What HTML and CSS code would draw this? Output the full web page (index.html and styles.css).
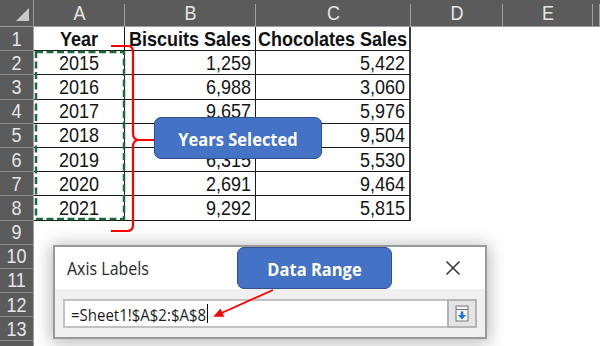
FILE: index.html
```html
<!DOCTYPE html>
<html>
<head>
<meta charset="utf-8">
<link rel="stylesheet" href="styles.css">
</head>
<body>
<div class="page">
  <div class="sheet">
    <div class="corner"><span class="tri"></span></div>
    <div class="ch"><span>A</span></div><div class="ch"><span>B</span></div><div class="ch"><span>C</span></div><div class="ch"><span>D</span></div><div class="ch"><span>E</span></div><div class="ch"></div>

    <div class="rh"><span>1</span></div>
    <div class="c t hd mid"><span>Year</span></div><div class="c t hd mid"><span>Biscuits Sales</span></div><div class="c t hd mid edge"><span>Chocolates Sales</span></div><div class="c"></div><div class="c"></div><div class="c"></div>

    <div class="rh"><span>2</span></div>
    <div class="c t mid"><span>2015</span></div><div class="c t num"><span>1,259</span></div><div class="c t num edge"><span>5,422</span></div><div class="c"></div><div class="c"></div><div class="c"></div>

    <div class="rh"><span>3</span></div>
    <div class="c t mid"><span>2016</span></div><div class="c t num"><span>6,988</span></div><div class="c t num edge"><span>3,060</span></div><div class="c"></div><div class="c"></div><div class="c"></div>

    <div class="rh"><span>4</span></div>
    <div class="c t mid"><span>2017</span></div><div class="c t num"><span>9,657</span></div><div class="c t num edge"><span>5,976</span></div><div class="c"></div><div class="c"></div><div class="c"></div>

    <div class="rh"><span>5</span></div>
    <div class="c t mid"><span>2018</span></div><div class="c t num"></div><div class="c t num edge"><span>9,504</span></div><div class="c"></div><div class="c"></div><div class="c"></div>

    <div class="rh"><span>6</span></div>
    <div class="c t mid"><span>2019</span></div><div class="c t num"><span>6,315</span></div><div class="c t num edge"><span>5,530</span></div><div class="c"></div><div class="c"></div><div class="c"></div>

    <div class="rh"><span>7</span></div>
    <div class="c t mid"><span>2020</span></div><div class="c t num"><span>2,691</span></div><div class="c t num edge"><span>9,464</span></div><div class="c"></div><div class="c"></div><div class="c"></div>

    <div class="rh"><span>8</span></div>
    <div class="c t mid"><span>2021</span></div><div class="c t num"><span>9,292</span></div><div class="c t num edge"><span>5,815</span></div><div class="c"></div><div class="c"></div><div class="c"></div>

    <div class="rh"><span>9</span></div>
    <div class="c"></div><div class="c"></div><div class="c"></div><div class="c"></div><div class="c"></div><div class="c"></div>
    <div class="rh"><span>10</span></div>
    <div class="c"></div><div class="c"></div><div class="c"></div><div class="c"></div><div class="c"></div><div class="c"></div>
    <div class="rh"><span>11</span></div>
    <div class="c"></div><div class="c"></div><div class="c"></div><div class="c"></div><div class="c"></div><div class="c"></div>
    <div class="rh"><span>12</span></div>
    <div class="c"></div><div class="c"></div><div class="c"></div><div class="c"></div><div class="c"></div><div class="c"></div>
    <div class="rh"><span>13</span></div>
    <div class="c"></div><div class="c"></div><div class="c"></div><div class="c"></div><div class="c"></div><div class="c"></div>
    <div class="rh"></div>
    <div class="c"></div><div class="c"></div><div class="c"></div><div class="c"></div><div class="c"></div><div class="c"></div>
  </div>

  <svg class="marks" width="600" height="346" viewBox="0 0 600 346">
    <rect x="36" y="52" width="88" height="167" fill="none" stroke="#1d6a3c" stroke-width="2.5" stroke-dasharray="7 3.5"/>
    <path d="M111,46 H128 Q133,46 133,52 V133 Q133,140 139,140 H156 M139,140 Q133,140 133,147 V225 Q133,231 127,231 H111" fill="none" stroke="#ff0000" stroke-width="2.2"/>
  </svg>

  <div class="callout years"><span>Years Selected</span></div>

  <div class="dialog">
    <div class="dlg-title">
      <span class="dlg-name">Axis Labels</span>
      <svg class="close" width="16" height="16" viewBox="0 0 16 16"><path d="M1.5,1.5 L14.5,14.5 M14.5,1.5 L1.5,14.5" stroke="#333" stroke-width="1.5" fill="none"/></svg>
    </div>
    <div class="dlg-body">
      <div class="field"><span class="ref">=Sheet1!$A$2:$A$8</span><span class="caret"></span></div>
      <div class="btn">
        <svg width="14" height="17" viewBox="0 0 14 17">
          <rect x="1" y="1" width="12" height="15" fill="#f4f4f4" stroke="#777" stroke-width="1"/>
          <line x1="1" y1="4.5" x2="13" y2="4.5" stroke="#777" stroke-width="1"/>
          <path d="M7,6.5 V11" stroke="#1a73d1" stroke-width="2.6"/>
          <path d="M3,10 L11,10 L7,14.5 Z" fill="#1a73d1"/>
        </svg>
      </div>
    </div>
  </div>

  <div class="callout range"><span>Data Range</span></div>

  <svg class="marks" width="600" height="346" viewBox="0 0 600 346">
    <defs>
      <marker id="ah" markerWidth="10" markerHeight="10" refX="7" refY="5" orient="auto" markerUnits="userSpaceOnUse">
        <path d="M0,0.5 L10,5 L0,9.5 Z" fill="#ff0000"/>
      </marker>
    </defs>
    <line x1="273" y1="290" x2="216" y2="315.5" stroke="#ff0000" stroke-width="1.8" marker-end="url(#ah)"/>
  </svg>
</div>
</body>
</html>
```

FILE: styles.css
```css
* { box-sizing: border-box; }
html, body { margin: 0; padding: 0; background: #ffffff; }
body { width: 600px; height: 346px; overflow: hidden; }

.page { position: relative; width: 600px; height: 346px; overflow: hidden; }

.sheet {
  display: grid;
  grid-template-columns: 34px 91px 131px 155px 92px 90px 7px;
  grid-template-rows: 27px repeat(14, 24.2px);
  font-family: "Liberation Sans", Arial, sans-serif;
  font-size: 18px;
  color: #141414;
}
.sheet span { display: inline-block; transform: scaleY(1.12); }

.corner {
  background: #5b5b5b;
  border-right: 1px solid #9a9a9a;
  border-bottom: 1px solid #9a9a9a;
  display: flex;
  justify-content: flex-end;
  align-items: flex-end;
  padding: 0 4px 5px 0;
}
.sheet .tri {
  width: 0; height: 0;
  transform: none;
  border-left: 13px solid transparent;
  border-bottom: 13px solid #c9c9c9;
}

.ch {
  background: linear-gradient(#a0a0a0, #a0a0a0) right 4px / 1px calc(100% - 4px) no-repeat, #5b5b5b;
  border-bottom: 1px solid #a0a0a0;
  color: #e6e6e6;
  display: flex;
  align-items: center;
  justify-content: center;
  line-height: 1;
}

.rh {
  background: #5b5b5b;
  border-right: 1px solid #a0a0a0;
  border-bottom: 1px solid #8e8e8e;
  color: #e6e6e6;
  display: flex;
  align-items: center;
  justify-content: center;
  line-height: 1;
}

.c {
  background: #ffffff;
  display: flex;
  align-items: center;
  padding: 0 3px;
  white-space: nowrap;
  line-height: 1;
}
.t {
  border-right: 1px solid #1a1a1a;
  border-bottom: 1px solid #1a1a1a;
}
.edge { border-right: 2px solid #3c3c3c; }
.hd { font-weight: bold; color: #111; }
.mid { justify-content: center; }
.num { justify-content: flex-end; padding-right: 4px; }

.marks {
  position: absolute;
  left: 0;
  top: 0;
  pointer-events: none;
}

.callout {
  position: absolute;
  display: flex;
  align-items: center;
  justify-content: center;
  background: #4472c4;
  border: 1.5px solid #2f528f;
  border-radius: 7px;
  color: #ffffff;
  font-family: "Open Sans", "Noto Sans", sans-serif;
  font-weight: 700;
  font-size: 16.5px;
}
.callout span { display: inline-block; transform: scaleY(1.12); }
.years { left: 154px; top: 117px; width: 168px; height: 42px; }
.range { left: 237px; top: 247px; width: 155px; height: 42px; }

.dialog {
  position: absolute;
  left: 53px;
  top: 245px;
  width: 434px;
  height: 94px;
  border: 2px solid #9a9a9a;
  background: #ffffff;
  box-shadow: 0 2px 16px 2px rgba(0, 0, 0, 0.28);
  display: flex;
  flex-direction: column;
  font-family: "Open Sans", "Noto Sans", sans-serif;
}
.dlg-title {
  height: 42px;
  display: flex;
  align-items: center;
  justify-content: space-between;
  padding: 0 24px 0 12px;
}
.dlg-name { font-size: 16px; color: #2a2a2a; display: inline-block; transform: scaleY(1.1); }
.close { display: block; }
.dlg-body {
  flex: 1;
  background: #f0f0f0;
  display: flex;
  padding: 10px 8px 0 8px;
  align-items: flex-start;
}
.field {
  width: 384px;
  height: 29px;
  background: #ffffff;
  border: 2px solid #c2c2c2;
  border-right: none;
  display: flex;
  align-items: center;
  padding-left: 6px;
  font-size: 15px;
  color: #1c1c1c;
}
.ref { display: inline-block; transform: scaleY(1.1); }
.caret {
  width: 1px;
  height: 19px;
  background: #000;
  margin-left: 1px;
}
.btn {
  width: 30px;
  height: 29px;
  background: #e4e4e4;
  border: 2px solid #b4b4b4;
  display: flex;
  align-items: center;
  justify-content: center;
}
.btn svg { display: block; }
```
